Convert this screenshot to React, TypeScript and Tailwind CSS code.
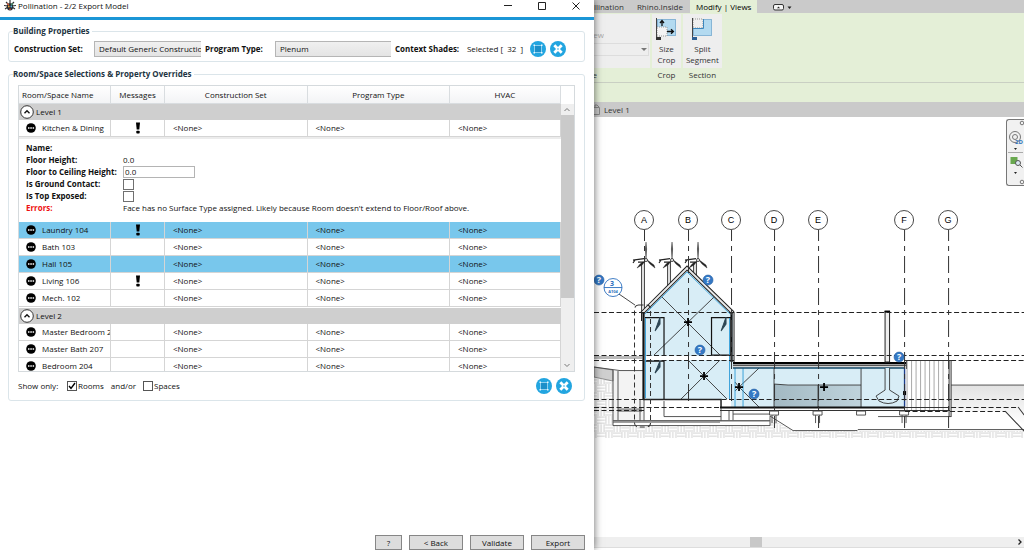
import { useState } from 'react';
import type { ReactNode } from 'react';

interface Room {
  name: string;
  alert?: boolean;
  selected?: boolean;
  expanded?: boolean;
}

interface Level {
  name: string;
  rooms: Room[];
}

const LEVELS: Level[] = [
  {
    name: 'Level 1',
    rooms: [
      { name: 'Kitchen & Dining', alert: true, expanded: true },
      { name: 'Laundry 104', alert: true, selected: true },
      { name: 'Bath 103' },
      { name: 'Hall 105', selected: true },
      { name: 'Living 106', alert: true },
      { name: 'Mech. 102' },
    ],
  },
  {
    name: 'Level 2',
    rooms: [{ name: 'Master Bedroom 201' }, { name: 'Master Bath 207' }, { name: 'Bedroom 204' }],
  },
];

const GRIDS = [
  { label: 'A', x: 644, end: 262 },
  { label: 'B', x: 688, end: 404 },
  { label: 'C', x: 731, end: 404 },
  { label: 'D', x: 774, end: 428 },
  { label: 'E', x: 818, end: 428 },
  { label: 'F', x: 904, end: 428 },
  { label: 'G', x: 948, end: 428 },
];

const Logo = () => (
  <svg viewBox="0 0 12 12" className="size-3 shrink-0" aria-hidden="true">
    <path d="M6 0v4M2 2l3 3M10 2L7 5M0 5.5l4 .5M12 5.5L8 6M1 9l3-2M11 9L8 7" stroke="#333" strokeWidth="1.2" />
    <ellipse cx="6" cy="6.8" rx="3.2" ry="3.6" fill="#252b30" />
    <path d="M3 3.5l2 1.5" stroke="#d9583b" strokeWidth="1.3" />
    <path d="M7 5l2-1.5" stroke="#3f8f68" strokeWidth="1.3" />
    <circle cx="4.8" cy="6.5" r=".9" fill="#e9a13b" />
    <circle cx="7.3" cy="6.5" r=".9" fill="#5fa9cf" />
    <path d="M5 9.2h2" stroke="#d64b3a" />
  </svg>
);

const SelectIcon = () => (
  <svg viewBox="0 0 16 16" className="size-4" aria-hidden="true">
    <circle cx="8" cy="8" r="8" fill="#22a5e0" />
    <rect x="4.5" y="4.5" width="7" height="7" fill="#1c8fc9" stroke="#a9dcf4" strokeWidth=".8" />
    <path d="M3.500 3.500h1.500v1.500H3.500zM11 3.500h1.500v1.500H11zM3.500 11h1.500v1.500H3.500zM11 11h1.500v1.500H11z" fill="#e9f7fd" />
  </svg>
);

const ClearIcon = () => (
  <svg viewBox="0 0 16 16" className="size-4" aria-hidden="true">
    <circle cx="8" cy="8" r="8" fill="#22a5e0" />
    <path d="M5.300 5.300l5.400 5.400M10.700 5.300l-5.400 5.400" stroke="#fff" strokeWidth="2.800" strokeLinecap="square" />
    <circle cx="8" cy="8" r=".8" fill="#22a5e0" />
  </svg>
);

const RoundActions = () => (
  <div className="flex gap-1">
    <button type="button" aria-label="Select" className="size-4">
      <SelectIcon />
    </button>
    <button type="button" aria-label="Clear" className="size-4">
      <ClearIcon />
    </button>
  </div>
);

const Alert = () => (
  <svg viewBox="0 0 6 12" className="mx-auto h-3 w-[6px]" role="img" aria-label="Error">
    <path d="M1 .5h4L4.3 7.5H1.7z" fill="#000" />
    <rect x="1.3" y="8.8" width="3.4" height="2.7" rx=".8" fill="#000" />
  </svg>
);

const DialogButton = ({ children, className }: { children: ReactNode; className: string }) => (
  <button type="button" className={`h-[15px] border border-[#868686] bg-[#dddddd] leading-3 ${className}`}>
    {children}
  </button>
);

const RoomDetails = () => (
  <div className="grid grid-cols-[97px_1fr] items-center pt-[3px] pl-[7px] text-[8px] leading-[12px]">
    <b>Name:</b>
    <span />
    <b>Floor Height:</b>
    <span>0.0</span>
    <label htmlFor="ceiling" className="font-bold whitespace-nowrap">
      Floor to Ceiling Height:
    </label>
    <input id="ceiling" defaultValue="0.0" className="h-[12px] w-[72px] border border-[#b4b4b4] px-[1px]" />
    <label htmlFor="ground" className="font-bold">
      Is Ground Contact:
    </label>
    <input id="ground" type="checkbox" className="size-[11px] appearance-none border border-[#707070]" />
    <label htmlFor="top" className="font-bold">
      Is Top Exposed:
    </label>
    <input id="top" type="checkbox" className="size-[11px] appearance-none border border-[#707070]" />
    <b className="text-[#ee1111]">Errors:</b>
    <span className="whitespace-nowrap">
      Face has no Surface Type assigned. Likely because Room doesn't extend to Floor/Roof above.
    </span>
  </div>
);

const RoomRow = ({ room }: { room: Room }) => {
  const bg = room.selected ? 'bg-[#78c7ec]' : 'bg-white';
  return (
    <>
      <tr className={`h-[17px] ${bg}`}>
        <td className="overflow-hidden border-r border-b border-[#d5d5d5] p-0">
          <div className="flex items-center gap-[6px] pl-[7px] whitespace-nowrap">
            <svg viewBox="0 0 10 10" className="size-[10px] shrink-0" aria-hidden="true">
              <circle cx="5" cy="5" r="4.8" fill="#000" />
              <path d="M2 4.3h1.5v1.4H2zM4.3 4.3h1.5v1.4H4.3zM6.6 4.3h1.5v1.4H6.6z" fill="#fff" />
            </svg>
            {room.name}
          </div>
        </td>
        <td className="border-r border-b border-[#d5d5d5] p-0">{room.alert && <Alert />}</td>
        <td className="border-r border-b border-[#d5d5d5] p-0 pl-2">&lt;None&gt;</td>
        <td className="border-r border-b border-[#d5d5d5] p-0 pl-2">&lt;None&gt;</td>
        <td className="border-r border-b border-[#d5d5d5] p-0 pl-2">&lt;None&gt;</td>
      </tr>
      {room.expanded && (
        <tr>
          <td colSpan={5} className="h-[85px] border-t-2 border-[#ececec] p-0 align-top">
            <RoomDetails />
          </td>
        </tr>
      )}
    </>
  );
};

const LevelRows = ({ level }: { level: Level }) => {
  const [open, setOpen] = useState(true);
  return (
    <>
      <tr className="h-4 bg-[#cfcfcf]">
        <td colSpan={5} className="p-0">
          <button type="button" onClick={() => setOpen(!open)} className="flex h-4 items-center gap-[2px] pl-[1px]">
            <svg viewBox="0 0 14 14" className="size-[14px]" aria-hidden="true">
              <circle cx="7" cy="7" r="6.3" fill="#fff" stroke="#333" />
              <path d="M4.5 8.2L7 5.8l2.5 2.4" fill="none" stroke="#111" strokeWidth="1.4" />
            </svg>
            {level.name}
          </button>
        </td>
      </tr>
      {open && level.rooms.map((room) => <RoomRow key={room.name} room={room} />)}
      <tr className="h-px">
        <td colSpan={5} className="p-0" />
      </tr>
    </>
  );
};

const RoomTable = () => (
  <div className="flex h-[287px] overflow-hidden border border-[#d5dadd]">
    <div className="min-w-0 flex-1">
      <table className="w-full table-fixed border-separate border-spacing-0 text-left">
        <colgroup>
          <col className="w-[92px]" />
          <col className="w-[54px]" />
          <col className="w-[26.3%]" />
          <col className="w-[26.3%]" />
          <col />
        </colgroup>
        <thead>
          <tr className="h-[18px] bg-linear-to-b from-white to-[#f2f3f5]">
            {['Room/Space Name', 'Messages', 'Construction Set', 'Program Type', 'HVAC'].map((title, i) => (
              <th
                key={title}
                className={`border-r border-b border-[#d9dde0] p-0 font-normal whitespace-nowrap ${i === 0 ? 'pl-[3px]' : 'text-center'}`}
              >
                {title}
              </th>
            ))}
          </tr>
        </thead>
        <tbody>
          {LEVELS.map((level) => (
            <LevelRows key={level.name} level={level} />
          ))}
        </tbody>
      </table>
    </div>
    <div className="flex w-[13px] shrink-0 flex-col pt-[18px]">
      <div className="flex flex-1 flex-col items-center bg-[#efefef]">
        <svg viewBox="0 0 12 11" className="h-[11px] w-3" aria-hidden="true">
          <path d="M3.5 7L6 4.5 8.5 7" fill="none" stroke="#777" />
        </svg>
        <div className="h-[183px] w-full bg-[#cacaca]" />
        <svg viewBox="0 0 12 11" className="mt-auto h-[11px] w-3" aria-hidden="true">
          <path d="M3.5 4L6 6.5 8.5 4" fill="none" stroke="#777" />
        </svg>
      </div>
    </div>
  </div>
);

const ExportDialog = () => (
  <main className="z-10 flex w-[58%] shrink-0 flex-col bg-white shadow-[0_0_8px_rgba(0,0,0,0.6)]">
    <header className="flex h-[17px] items-start justify-between pr-[13px] pl-1">
      <h1 className="flex items-center gap-[2px] text-[8px] leading-3">
        <Logo />
        Pollination - 2/2 Export Model
      </h1>
      <div className="flex gap-[24px]">
        <button type="button" aria-label="Minimize">
          <svg viewBox="0 0 10 12" className="h-3 w-[10px]"><path d="M1 5.5h8" stroke="#222" /></svg>
        </button>
        <button type="button" aria-label="Maximize">
          <svg viewBox="0 0 10 12" className="h-3 w-[10px]"><path d="M1.5 2.5h7v7h-7z" fill="none" stroke="#222" /></svg>
        </button>
        <button type="button" aria-label="Close">
          <svg viewBox="0 0 10 12" className="h-3 w-[10px]"><path d="M1.5 2.5l7 7M8.5 2.5l-7 7" stroke="#222" /></svg>
        </button>
      </div>
    </header>
    <div className="h-[3px] bg-[#1b96d6]" />
    <div className="flex flex-1 flex-col pt-[5px] pr-[9px] pl-2">
      <fieldset className="min-w-0 rounded-[3px] border border-[#dbe5ea] px-[4px]">
        <legend className="pr-[2px] font-bold text-[#1d3442]">Building Properties</legend>
        <div className="flex h-[24px] items-center pl-[1px] whitespace-nowrap">
          <b className="w-[80px] shrink-0">Construction Set:</b>
          <button type="button" aria-label="Construction set" className="h-4 w-[107px] shrink-0 overflow-hidden border border-r-0 border-[#b5b5b5] bg-linear-to-b from-[#f0f0f0] to-[#e4e4e4] pl-1 text-left">
            Default Generic Construction Set
          </button>
          <b className="w-[74px] shrink-0 pl-1">Program Type:</b>
          <button type="button" aria-label="Program type" className="h-4 flex-1 overflow-hidden border border-r-0 border-[#b5b5b5] bg-linear-to-b from-[#f0f0f0] to-[#e4e4e4] pl-1 text-left">
            Plenum
          </button>
          <b className="w-[76px] shrink-0 pl-1">Context Shades:</b>
          <span className="w-[63px] shrink-0">Selected [&nbsp; 32 &nbsp;]</span>
          <RoundActions />
          <span className="w-[14px]" />
        </div>
      </fieldset>
      <fieldset className="mt-[6px] min-w-0 rounded-[3px] border border-[#dbe5ea] px-[4px]">
        <legend className="pr-[2px] font-bold text-[#1d3442]">Room/Space Selections &amp; Property Overrides</legend>
        <div className="px-[5px] pt-[5px]">
          <RoomTable />
          <div className="flex h-[28px] items-center pr-[3px]">
            <span className="w-[49px]">Show only:</span>
            <label className="flex items-center gap-[1px]">
              <span className="relative flex">
                <input type="checkbox" defaultChecked className="peer size-[10px] appearance-none border border-[#555] bg-white" />
                <svg viewBox="0 0 10 10" className="pointer-events-none absolute inset-0 hidden size-[10px] peer-checked:block" aria-hidden="true">
                  <path d="M2 5l2 2.3L8 2" fill="none" stroke="#000" strokeWidth="1.4" />
                </svg>
              </span>
              Rooms
            </label>
            <span className="px-[7px]">and/or</span>
            <label className="flex items-center gap-[1px]">
              <input type="checkbox" className="size-[10px] appearance-none border border-[#555] bg-white" />
              Spaces
            </label>
            <span className="flex-1" />
            <RoundActions />
          </div>
        </div>
      </fieldset>
      <footer className="mt-auto flex justify-end gap-[7px]">
        <DialogButton className="w-[27px]">?</DialogButton>
        <DialogButton className="w-[54px]">&lt; Back</DialogButton>
        <DialogButton className="w-[54px]">Validate</DialogButton>
        <DialogButton className="w-[54px]">Export</DialogButton>
      </footer>
    </div>
  </main>
);

const CropIcon = () => (
  <svg viewBox="0 0 22 24" className="h-6 w-[22px]" aria-hidden="true">
    <rect x="2.5" y="2.5" width="18" height="16" fill="#b3daf0" stroke="#3d87bd" strokeDasharray="1 1" />
    <rect x="2" y="10" width="10" height="9" fill="#f4f4f4" stroke="#999" strokeDasharray="1 1" />
    <path d="M1.5 1v19" stroke="#444" />
    <path d="M1 20h5v3H1z" fill="#333" />
    <path d="M7 9V4M5 6l2-2.4L9 6M12 14.5h6M16 12.3l2.4 2.2L16 16.7" fill="none" stroke="#111" strokeWidth="1.3" />
  </svg>
);

const SplitIcon = () => (
  <svg viewBox="0 0 22 24" className="h-6 w-[22px]" aria-hidden="true">
    <rect x="2.5" y="2.5" width="18" height="16" fill="#b3daf0" stroke="#3d87bd" strokeDasharray="1 1" />
    <path d="M2 2h10v9H2z" fill="#efefef" stroke="#999" strokeDasharray="1 1" />
    <path d="M2 11.5h7M12.5 2v9.500H7.500" fill="none" stroke="#3d87bd" />
    <path d="M1.500 1v19" stroke="#444" />
    <path d="M1 20h5v3H1z" fill="#2d5f94" />
  </svg>
);

const RibbonTool = ({ icon, lines, title, className }: { icon: ReactNode; lines: string[]; title: string; className: string }) => (
  <section className={`flex shrink-0 flex-col text-center ${className}`}>
    <button type="button" className="flex h-[54px] flex-col items-center bg-[#eeeeee] pt-[3px] leading-[11px]">
      {icon}
      <span className="pt-[2px]">
        {lines[0]}
        <br />
        {lines[1]}
      </span>
    </button>
    <h2 className="mt-[1px] leading-3">{title}</h2>
  </section>
);

const Ribbon = () => (
  <header className="h-[102px] bg-[#e4efd7] text-[#333]">
    <nav className="flex h-[13px] bg-[#cacaca] leading-[13px]">
      <a href="#pollination" className="flex w-[30px] justify-end overflow-hidden">
        Pollination
      </a>
      <a href="#rhino" className="pr-[7px] pl-[13px]">
        Rhino.Inside
      </a>
      <a href="#modify" className="bg-[#e4efd7] px-[6px] text-black">
        Modify | Views
      </a>
      <button type="button" aria-label="Ribbon display" className="ml-4">
        <svg viewBox="0 0 20 8" className="h-2 w-5" aria-hidden="true">
          <rect x=".5" y="1.500" width="10" height="5.500" rx="1.500" fill="#f4f4f4" stroke="#333" />
          <path d="M4 5.200l1.500-1.800L7 5.200zM14.500 3.500h4L16.500 6z" fill="#222" />
        </svg>
      </button>
    </nav>
    <div className="flex h-[70px] gap-[2px] border-b border-[#c9cfc3] pt-[1px]">
      <section className="flex w-[56px] shrink-0 flex-col">
        <div className="flex h-[54px] flex-col bg-[#eeeeee]">
          <span className="flex h-[29px] w-[10px] items-end justify-end overflow-hidden pb-[2px] text-[#aaaaaa]">View</span>
          <button type="button" aria-label="Scope" className="mr-[1px] flex h-[13px] items-center justify-end border border-l-0 border-[#dddddd] pr-[1px]">
            <svg viewBox="0 0 6 4" className="h-1 w-[6px]" aria-hidden="true"><path d="M0 0h6L3 3z" fill="#777" /></svg>
          </button>
        </div>
        <span className="mt-[1px] flex w-[3px] justify-end overflow-hidden leading-3">Phase</span>
      </section>
      <RibbonTool icon={<CropIcon />} lines={['Size', 'Crop']} title="Crop" className="w-[29px]" />
      <RibbonTool icon={<SplitIcon />} lines={['Split', 'Segment']} title="Section" className="w-[39px]" />
    </div>
  </header>
);

const Help = ({ x, y }: { x: number; y: number }) => (
  <g>
    <circle cx={x} cy={y} r="5" fill="#3478c4" stroke="#255fa3" strokeWidth=".6" />
    <text x={x} y={y + 3} textAnchor="middle" fontSize="9" fontWeight="700" fill="#fff">?</text>
  </g>
);

const Turbine = ({ x, bottom }: { x: number; bottom: number }) => (
  <g stroke="#222" fill="none">
    <path d={`M${x - 4.5} 263V${bottom}h3V262z`} fill="#ddd" strokeWidth=".8" />
    <path d={`M${x - 13} 260l11-1.500M${x - 13} 263l2-3M${x - 8} 262h5`} strokeWidth="1.200" />
    <path d={`M${x} 259l-.6-10 .6-7 .6 7zM${x} 259l8 6 1 3-5-4zM${x} 260l-4 5-5 3 3-4z`} fill="#222" strokeWidth=".4" />
    <circle cx={x} cy="260" r="1.500" fill="#fff" strokeWidth=".8" />
  </g>
);

const Elevation = () => (
  <svg viewBox="594 117 430 420" preserveAspectRatio="xMinYMin slice" className="w-full" role="img" aria-label="Building elevation">
    <defs>
      <pattern id="soil" width="16" height="16" x="597" y="384" patternUnits="userSpaceOnUse">
        <path d="M0 1h8M0 4h8M0 7h8M9 0v8M12 0v8M15 0v8M8 9h8M8 12h8M8 15h8M1 8v8M4 8v8M7 8v8" stroke="#c8c8c8" strokeWidth=".8" />
      </pattern>
      <linearGradient id="slope" x1="0" y1="0" x2="0" y2="1">
        <stop offset="0" stopColor="#e2e2e2" />
        <stop offset="1" stopColor="#fff" />
      </linearGradient>
      <linearGradient id="glass" x1="0" y1="0" x2="1" y2="0">
        <stop offset="0" stopColor="#a3b9c3" />
        <stop offset="1" stopColor="#bfd3dc" />
      </linearGradient>
    </defs>

    {/* ground */}
    <path d="M594 378l19 3v45h157l-1-8 24 13h231v7H594z" fill="url(#soil)" />
    <path d="M951 385h73v40l-20-14h-53z" fill="url(#slope)" />
    <path d="M613 371h30v49h-30z" fill="#f3f3f3" />
    <path d="M594 367l19 3v11l-19-4z" fill="#cfcfcf" stroke="#777" strokeWidth=".8" />
    <path d="M594 356h48v3h-48z" fill="#bbb" />
    <g fill="none" stroke="#444" strokeWidth=".9">
      <path d="M594 367l26 3.500h23M613 370v55.500h157V416M618 371v49M613 420.500h157M613 422h107M664 401v15.500h57M618 409h24M618 411h24M640 399v22M644 399v22M721 408v13M729 410v10M733 410v10" />
      <path d="M770 416l23 14.500h64l1-1h166M951 385h73M878 416.500h73M733 414h37" />
      <path d="M613 421h157" stroke="#777" />
    </g>

    {/* fence */}
    <path d="M907 361v49M911.500 361v49M916 361v49M920.500 361v49M925 361v49M929.500 361v49M934 361v49M938.500 361v49M943 361v49" stroke="#aaa" strokeWidth="1" />
    <path d="M904 360.500h47V417M949 361v56" fill="none" stroke="#333" />

    <Turbine x={646} bottom={312} />
    <Turbine x={672} bottom={286} />
    <Turbine x={698} bottom={280} />

    {/* house */}
    <path d="M687 269l-44 44v86h88v8h173v-39H733v-55z" fill="#d8edf6" />
    <path d="M774 384l14 1.500h73V407h-87z" fill="url(#glass)" />
    <path d="M644 356h87v4h-87z" fill="#fff" />
    <g fill="none" stroke="#333" strokeWidth=".9">
      <path d="M662 297l58 58M714 297l-60 58M688 360l39 39M720 360l-39 39M759 368l-20 19 20 20M774 368v39M774 384l14 1h73M818 385v22M861 368v39M735 382l4 5-4 4" />
      <path d="M645 317.500h19V355M645 361h19v38M711.500 317.500H731V355h-19.500z" stroke="#111" strokeWidth="1.200" />
    </g>
    <path d="M660 317l-5 14 5-7zM660 361l-5 12 5-6zM726 317l-5 14 5-7z" fill="#2e4654" stroke="#2e4654" />
    <path d="M642 313l45-45 46 45" fill="none" stroke="#222" strokeWidth="4" />
    <path d="M642 313l45-45 46 45" fill="none" stroke="#e9e9e9" strokeWidth="2" />
    <path d="M645 314l42-42 43 42" fill="none" stroke="#2b9bd8" strokeWidth=".8" />
    <path d="M643.500 312v87M731.500 312v50" stroke="#111" strokeWidth="2.200" />
    <path d="M645.500 318v80M729.500 318v81M735 368v39M743 368v39" stroke="#2b9bd8" strokeWidth=".9" />
    <path d="M641.500 311v10M734 312v55" stroke="#222" />
    <path d="M643 399.500h78V408" fill="none" stroke="#222" strokeWidth="1.500" />
    <path d="M733 362h173v6H733z" fill="#d5d5d5" />
    <path d="M733 363h173" stroke="#000" strokeWidth="2.200" />
    <path d="M733 368h171" stroke="#174a69" strokeWidth="1.400" />
    <path d="M733 365.500h173M906.500 361v8" stroke="#555" />
    <path d="M720 407.500h185" stroke="#111" strokeWidth="2" />
    <path d="M720 410.500h230M905 407.500h44" stroke="#333" />
    <path d="M904.500 368v39" stroke="#1c3e8c" strokeWidth="1.400" />
    <path d="M904.500 391v4" stroke="#000" strokeWidth="3" />

    {/* chimney */}
    <path d="M885 311.500h4.500V362h-4.500z" fill="#eee" stroke="#222" />
    <path d="M885 368v22l-9 6 3 5q9 5 18 0l2-5-9.500-6v-22" fill="#d8edf6" stroke="#333" strokeWidth=".9" />
    <path d="M884.500 311.500h5.500" stroke="#000" strokeWidth="2" />

    {/* footings */}
    {[774, 817.5, 861, 904].map((x) => (
      <g key={x} fill="#fff" stroke="#444" strokeWidth=".9">
        {x !== 861 && <path d={`M${x - 2} 415v8M${x + 2} 415v8`} />}
        <path d={`M${x - 4.5} 411h9v4h-9z`} />
      </g>
    ))}

    {/* datum lines */}
    <g stroke="#222" strokeDasharray="5 2.500">
      <path d="M594 312.500h430M594 355.500h430M594 360.500h140M951 360.500h73M594 399.500h430M594 407.500h127M951 407.500h67M594 410.500h50M905 411.500h100" />
    </g>
    <path d="M1005 411l19 20M1018 407l6 8" stroke="#333" />
    <rect x="634.500" y="305" width="16" height="122" rx="4" fill="none" stroke="#333" strokeDasharray="5 3" />
    <path d="M619 294l16 11" stroke="#333" strokeWidth=".9" />

    {GRIDS.map(({ label, x, end }) => (
      <g key={label}>
        <path d={`M${x + 0.5} 230V${end}`} stroke="#333" strokeDasharray="17 5 5 5" strokeDashoffset="6" />
        <circle cx={x} cy="220" r="9.500" fill="#fff" stroke="#333" strokeWidth=".9" />
        <text x={x} y="223" textAnchor="middle" fontSize="9" className="font-['Liberation_Sans',sans-serif]">
          {label}
        </text>
      </g>
    ))}

    {[[688, 322], [704, 376], [739, 387], [824, 387]].map(([x, y]) => (
      <path key={x} d={`M${x - 4} ${y}h8M${x} ${y - 4}v8`} stroke="#000" strokeWidth="1.800" />
    ))}

    <g fill="none" stroke="#2b6fbe" strokeWidth=".9">
      <circle cx="613" cy="287.500" r="9" />
      <path d="M604 287.500h18" />
    </g>
    <g fill="#2b6fbe" textAnchor="middle">
      <text x="612" y="286" fontSize="7" fontWeight="700">3</text>
      <text x="613" y="293" fontSize="4" fontWeight="700">A104</text>
    </g>

    <Help x={599} y={280} />
    <Help x={708} y={280} />
    <Help x={700} y={350} />
    <Help x={754} y={394} />
    <Help x={899} y={357} />
  </svg>
);

const NavigationBar = () => (
  <aside className="absolute top-[2px] right-0 h-[67px] w-[18px] rounded-l-[3px] border border-r-0 border-[#777] bg-[#f1f1f1]">
    <svg viewBox="0 0 17 65" className="h-[65px] w-[17px]" aria-hidden="true">
      <g fill="none" stroke="#777">
        <circle cx="15" cy="3" r="1.800" />
        <circle cx="15" cy="62" r="1.800" />
        <circle cx="8" cy="17" r="5.500" />
        <circle cx="8" cy="17" r="2.500" />
        <path d="M1 32.500h15" stroke="#aaa" />
      </g>
      <text x="8" y="24" fontSize="6" fontWeight="700" fill="#2e72b8">2D</text>
      <path d="M3.500 37h7v7h-7z" fill="#69a84f" />
      <circle cx="11" cy="43" r="2.500" fill="#dceaf4" stroke="#555" />
      <path d="M13 45l2.500 2.500" stroke="#555" />
      <path d="M7 28h3l-1.500 2zM7 52h3l-1.500 2z" fill="#222" />
    </svg>
  </aside>
);

const ModelView = () => (
  <div className="flex min-w-0 flex-1 flex-col overflow-hidden bg-white">
    <Ribbon />
    <div className="flex h-[15px] items-center bg-[#cacaca] text-[#333]">
      <svg viewBox="0 0 8 12" className="h-3 w-2" aria-hidden="true">
        <path d="M0 3.500h5.500v7H0M1 3V1h2l2 2" fill="none" stroke="#888" />
      </svg>
      <span className="pl-[2px]">Level 1</span>
    </div>
    <div className="relative flex-1 overflow-hidden">
      <Elevation />
      <NavigationBar />
    </div>
    <div className="mb-[2px] flex h-[11px] items-center border-b border-[#dddddd] bg-[#efefef]">
      <span className="w-[36.300%]" />
      <span className="h-[10px] w-3 bg-[#c8c8c8]" />
      <svg viewBox="0 0 6 8" className="mr-[1px] ml-auto h-2 w-[6px]" aria-hidden="true">
        <path d="M1.500 1.500L4 4 1.500 6.500" fill="none" stroke="#222" strokeWidth="1.300" />
      </svg>
    </div>
  </div>
);

export default function App() {
  return (
    <div className="flex min-h-screen w-full overflow-hidden bg-white font-['Open_Sans','Noto_Sans',sans-serif] text-[8px] leading-3 text-[#111]">
      <ExportDialog />
      <ModelView />
    </div>
  );
}
